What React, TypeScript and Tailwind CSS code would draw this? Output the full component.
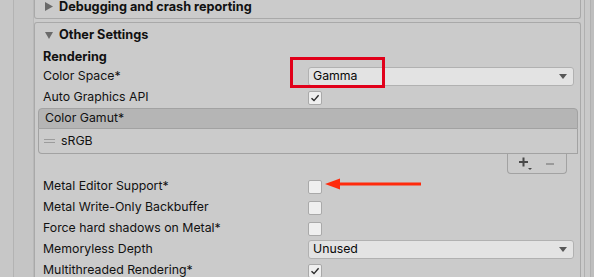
const font = { fontFamily: "Inter, 'Noto Sans', sans-serif" };

const Check = () => (
    <svg width="10" height="10" viewBox="0 0 10 10">
        <path d="M1.5 5.2 L4 7.6 L8.6 2.2" fill="none" stroke="#2a2a2a" strokeWidth="1.4" />
    </svg>
);

const Checkbox = ({ checked }: { checked?: boolean }) => (
    <div className="w-[14px] h-[14px] rounded-[2px] border border-[#a9a9a9] bg-[#efefef] flex items-center justify-center">
        {checked && <Check />}
    </div>
);

const Dropdown = ({ value }: { value: string }) => (
    <div className="flex-1 h-[19px] rounded-[3px] border border-[#b1b1b1] bg-[#e3e3e3] flex items-center justify-between pl-[4px] pr-[6px] text-[#090909]">
        <span>{value}</span>
        <svg width="8" height="5" viewBox="0 0 8 5">
            <path d="M0 0 H8 L4 5 Z" fill="#575757" />
        </svg>
    </div>
);

const Row = ({ label, children }: { label: string; children?: React.ReactNode }) => (
    <div className="h-[21px] flex items-center pr-[6px] shrink-0">
        <div className="w-[273px] pl-[8px] shrink-0">{label}</div>
        {children}
    </div>
);

export default function App() {
    return (
        <div
            className="w-[594px] h-[277px] overflow-hidden flex bg-[#cbcbcb] text-[12.3px] text-[#111111] relative"
            style={font}
        >
            <div className="w-[13px] bg-[#c7c7c7]" />
            <div className="w-[1px] bg-[#b3b3b3]" />
            <div className="w-[19px] bg-[#c5c5c5]" />
            <div className="w-[1px] bg-[#b9b9b9]" />

            <div className="w-[547px] flex flex-col">
                <div className="h-[19px] shrink-0 border-x border-b border-[#a9a9a9] rounded-b-[3px] flex items-start">
                    <div className="h-[13px] flex items-center pl-[10px] gap-[6px]">
                        <svg width="8" height="9" viewBox="0 0 8 9">
                            <path d="M0 0 L8 4.5 L0 9 Z" fill="#6a6a6a" />
                        </svg>
                        <span className="font-bold text-[12.7px]">Debugging and crash reporting</span>
                    </div>
                </div>

                <div className="mt-[3px] flex-1 border-x border-t border-[#a9a9a9] rounded-t-[3px] flex flex-col">
                    <div className="h-[24px] flex items-center pl-[10px] gap-[6px] shrink-0">
                        <svg width="8" height="7" viewBox="0 0 8 7">
                            <path d="M0 0 H8 L4 7 Z" fill="#6a6a6a" />
                        </svg>
                        <span className="font-bold text-[12.7px]">Other Settings</span>
                    </div>
                    <div className="h-[19px] flex items-center pl-[8px] font-bold text-[12.7px] shrink-0">Rendering</div>

                    <Row label="Color Space*">
                        <Dropdown value="Gamma" />
                    </Row>
                    <Row label="Auto Graphics API">
                        <Checkbox checked />
                    </Row>

                    <div className="ml-[3px] mr-[2px] flex flex-col shrink-0">
                        <div className="h-[21px] border border-[#a2a2a2] bg-[#b5b5b5] rounded-t-[4px] flex items-center pl-[6px]">
                            Color Gamut*
                        </div>
                        <div className="h-[25px] border-x border-b border-[#a2a2a2] rounded-bl-[4px] flex items-center pl-[5px] gap-[6px]">
                            <div className="w-[11px] flex flex-col gap-[2px]">
                                <div className="h-[1px] bg-[#9c9c9c]" />
                                <div className="h-[1px] bg-[#9c9c9c]" />
                            </div>
                            <span>sRGB</span>
                        </div>
                        <div className="self-end mr-[11px] w-[60px] h-[20px] border-x border-b border-[#a2a2a2] rounded-b-[4px] flex items-center pl-[11px] gap-[14px]">
                            <svg width="13" height="13" viewBox="0 0 13 13">
                                <path d="M4.5 0.5 V9.5 M0 5 H9" stroke="#484848" strokeWidth="2" />
                                <path d="M9 11 H13 L11 13 Z" fill="#484848" />
                            </svg>
                            <div className="w-[8px] h-[2px] bg-[#9a9a9a] mt-[1px]" />
                        </div>
                    </div>

                    <div className="h-[2px] shrink-0" />
                    <Row label="Metal Editor Support*">
                        <Checkbox />
                    </Row>
                    <Row label="Metal Write-Only Backbuffer">
                        <Checkbox />
                    </Row>
                    <Row label="Force hard shadows on Metal*">
                        <Checkbox />
                    </Row>
                    <Row label="Memoryless Depth">
                        <Dropdown value="Unused" />
                    </Row>
                    <Row label="Multithreaded Rendering*">
                        <Checkbox checked />
                    </Row>
                </div>
            </div>

            <div className="w-[3px] bg-[#cbcbcb]" />
            <div className="w-[1px] bg-[#b0b0b0]" />
            <div className="w-[5px] bg-[#c9c9c9]" />
            <div className="w-[1px] bg-[#b0b0b0]" />
            <div className="w-[3px] bg-[#bebebe]" />

            <div className="absolute left-[290px] top-[57px] w-[95px] h-[31px] border-[3px] border-[#e1001a]" />
            <svg className="absolute left-[324px] top-[178px]" width="98" height="12" viewBox="0 0 98 12">
                <path d="M1 6 L16 0.5 L16 11.5 Z" fill="#ff2a0c" />
                <path d="M14 6 H97" stroke="#ff2a0c" strokeWidth="3" />
            </svg>
        </div>
    );
}
